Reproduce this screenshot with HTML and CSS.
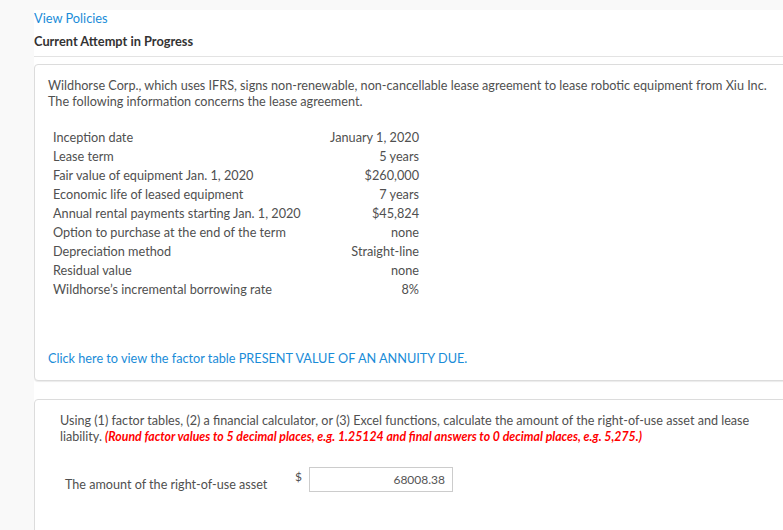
FILE: index.html
```html
<!DOCTYPE html>
<html>
<head>
<meta charset="utf-8">
<link rel="stylesheet" href="styles.css">
</head>
<body>
<div class="page">
  <div class="header">
    <a class="policies" href="#">View Policies</a>
    <div class="attempt">Current Attempt in Progress</div>
  </div>
  <div class="card card-info">
    <p class="intro">Wildhorse Corp., which uses IFRS, signs non-renewable, non-cancellable lease agreement to lease robotic equipment from Xiu Inc. The following information concerns the lease agreement.</p>
    <table class="facts">
      <tr><td>Inception date</td><td>January 1, 2020</td></tr>
      <tr><td>Lease term</td><td>5 years</td></tr>
      <tr><td>Fair value of equipment Jan. 1, 2020</td><td>$260,000</td></tr>
      <tr><td>Economic life of leased equipment</td><td>7 years</td></tr>
      <tr><td>Annual rental payments starting Jan. 1, 2020</td><td>$45,824</td></tr>
      <tr><td>Option to purchase at the end of the term</td><td>none</td></tr>
      <tr><td>Depreciation method</td><td>Straight-line</td></tr>
      <tr><td>Residual value</td><td>none</td></tr>
      <tr><td>Wildhorse’s incremental borrowing rate</td><td>8%</td></tr>
    </table>
    <a class="factor-link" href="#">Click here to view the factor table PRESENT VALUE OF AN ANNUITY DUE.</a>
  </div>
  <div class="card card-question">
    <p class="question"><span class="q-line">Using (1) factor tables, (2) a financial calculator, or (3) Excel functions, calculate the amount of the right-of-use asset and lease</span> <span class="q-line">liability. <em class="note">(Round factor values to 5 decimal places, e.g. 1.25124 and final answers to 0 decimal places, e.g. 5,275.)</em></span></p>
    <div class="answer-row">
      <span class="answer-label">The amount of the right-of-use asset</span>
      <span class="currency">$</span>
      <span class="answer-input">68008.38</span>
    </div>
  </div>
</div>
</body>
</html>
```
FILE: styles.css
```css
html, body {
  margin: 0;
  padding: 0;
  overflow: hidden;
  background: #f9f9f9;
}
body {
  font-family: Lato, "Open Sans", sans-serif;
  color: #505050;
}
.page {
  margin: 10px 0 0 34px;
  width: 749px;
  height: 520px;
  background: #fff;
  overflow: hidden;
}
.header {
  border-bottom: 1px solid #e3e3e3;
  height: 46px;
  width: 760px;
}
.policies {
  display: block;
  font-size: 12.8px;
  line-height: 16px;
  color: #1a8cd8;
  text-decoration: none;
}
.attempt {
  margin-top: 7px;
  font-size: 12.8px;
  line-height: 16px;
  font-weight: bold;
  color: #333;
}
.card {
  border: 1px solid #dcdcdc;
  border-radius: 4px;
  background: #fff;
  width: 760px;
}
.card-info {
  margin-top: 7px;
  padding: 13px 0 14px 13px;
  box-shadow: 0 1px 1px rgba(0,0,0,0.08);
}
.intro {
  margin: 0;
  font-size: 12.65px;
  line-height: 16px;
  width: 730px;
}
.facts {
  margin: 18px 0 0 5px;
  border-collapse: collapse;
  width: 366px;
  font-size: 12.7px;
}
.facts td {
  padding: 0;
  height: 19px;
  line-height: 19px;
}
.facts td:last-child {
  text-align: right;
}
.factor-link {
  display: block;
  margin-top: 51px;
  font-size: 12.7px;
  line-height: 16px;
  color: #1a8cd8;
  text-decoration: none;
}
.card-question {
  margin-top: 18px;
  height: 140px;
  padding: 13px 0 0 25px;
}
.question {
  margin: 0;
  width: 720px;
  font-size: 12.6px;
  line-height: 16px;
}
.q-line {
  display: block;
  white-space: nowrap;
  height: 16px;
}
.note {
  font-weight: bold;
  font-size: 12.3px;
  color: #f00;
}
.answer-row {
  margin-top: 22px;
  display: flex;
  align-items: flex-start;
  padding-left: 5px;
}
.answer-label {
  width: 230px;
  margin-top: 10px;
  font-size: 12.6px;
  line-height: 16px;
}
.currency {
  width: 14px;
  font-size: 12px;
  line-height: 16px;
  margin-top: 2px;
}
.answer-input {
  box-sizing: border-box;
  width: 144px;
  height: 25px;
  border: 1px solid #cccccc;
  padding: 0 7px;
  text-align: right;
  font-size: 12px;
  line-height: 23px;
  color: #555;
}
```
